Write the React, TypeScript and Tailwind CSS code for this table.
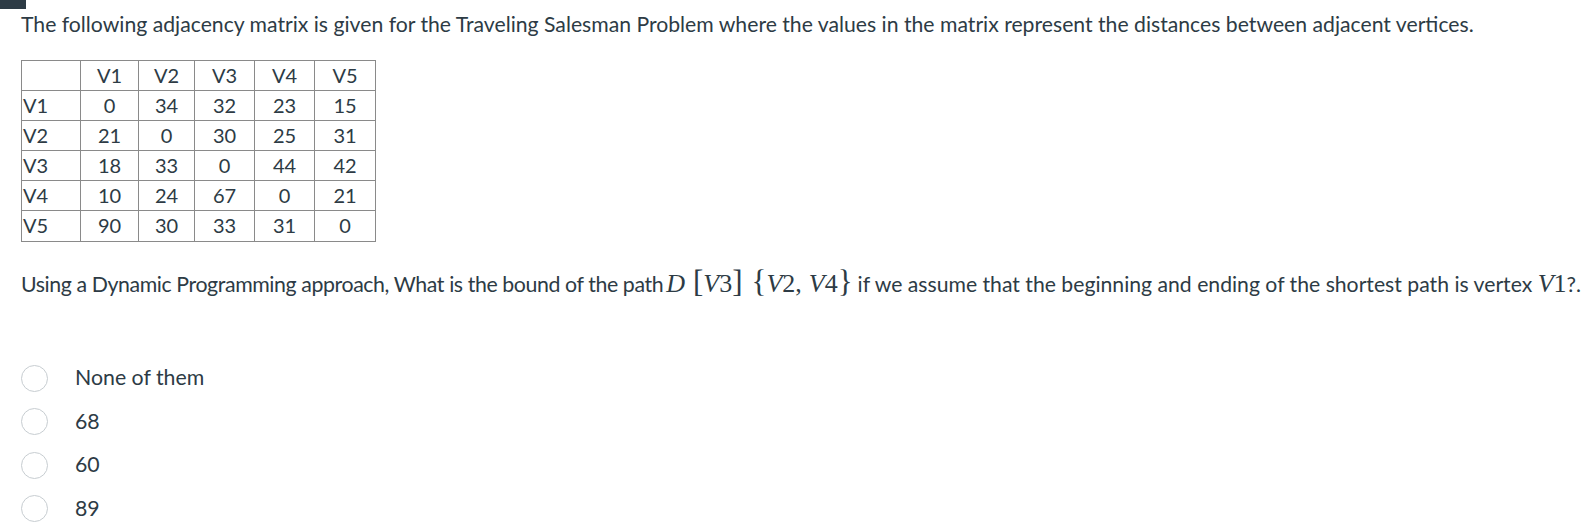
import React from 'react';

const heads = ['V1', 'V2', 'V3', 'V4', 'V5'];
const rows: [string, string[]][] = [
  ['V1', ['0', '34', '32', '23', '15']],
  ['V2', ['21', '0', '30', '25', '31']],
  ['V3', ['18', '33', '0', '44', '42']],
  ['V4', ['10', '24', '67', '0', '21']],
  ['V5', ['90', '30', '33', '31', '0']],
];
const widths = ['w-[58px]', 'w-[56px]', 'w-[60px]', 'w-[60px]', 'w-[61px]'];
const options = ['None of them', '68', '60', '89'];

function MathPath() {
  return (
    <span className="ml-[3px] mr-[5px] font-['Liberation_Serif',serif] text-[26px] whitespace-nowrap">
      <i>D</i>
      <span className="ml-[8px] text-[31px]">[</span>
      <i>V</i>3<span className="text-[31px]">]</span>
      <span className="ml-[9px] text-[31px]">{'{'}</span>
      <i>V</i>2,<span className="ml-[7px]" />
      <i>V</i>4<span className="text-[31px]">{'}'}</span>
    </span>
  );
}

export default function App() {
  return (
    <div className="w-[1592px] h-[531px] overflow-hidden bg-white text-[#2d3b45] font-['Lato',sans-serif]">
      <div className="h-[9px] w-[26px] bg-[#2d3b45]" />
      <div className="pl-[21px]">
        <p className="text-[21.2px] leading-[30px]">
          The following adjacency matrix is given for the Traveling Salesman Problem where the values in the matrix represent the distances between adjacent vertices.
        </p>

        <table className="mt-[21px] border-collapse text-[20px] leading-[27.1px]">
          <thead>
            <tr>
              <td className="w-[59px] border border-[#8a8a8a] p-px" />
              {heads.map((h, i) => (
                <td key={h} className={`${widths[i]} border border-[#8a8a8a] p-px text-center`}>
                  {h}
                </td>
              ))}
            </tr>
          </thead>
          <tbody>
            {rows.map(([label, vals]) => (
              <tr key={label}>
                <td className="border border-[#8a8a8a] p-px">{label}</td>
                {vals.map((v, i) => (
                  <td key={i} className="border border-[#8a8a8a] p-px text-center">
                    {v}
                  </td>
                ))}
              </tr>
            ))}
          </tbody>
        </table>

        <p className="mt-[25px] text-[21.2px] leading-[30px] whitespace-nowrap">
          <span className="text-[21.3px] tracking-[-0.4px]">Using a Dynamic Programming approach, What is the bound of the path</span>
          <MathPath />
          if we assume that the beginning and ending of the shortest path is vertex{' '}
          <span className="font-['Liberation_Serif',serif] text-[26px]">
            <i>V</i>1
          </span>
          ?.
        </p>

        <div className="mt-[58px] flex flex-col">
          {options.map((o) => (
            <label key={o} className="flex items-center h-[43.5px]">
              <span className="w-[27px] h-[27px] rounded-full border border-[#c7cdd1] bg-white shrink-0" />
              <span className="ml-[27px] text-[21.3px]">{o}</span>
            </label>
          ))}
        </div>
      </div>
    </div>
  );
}
